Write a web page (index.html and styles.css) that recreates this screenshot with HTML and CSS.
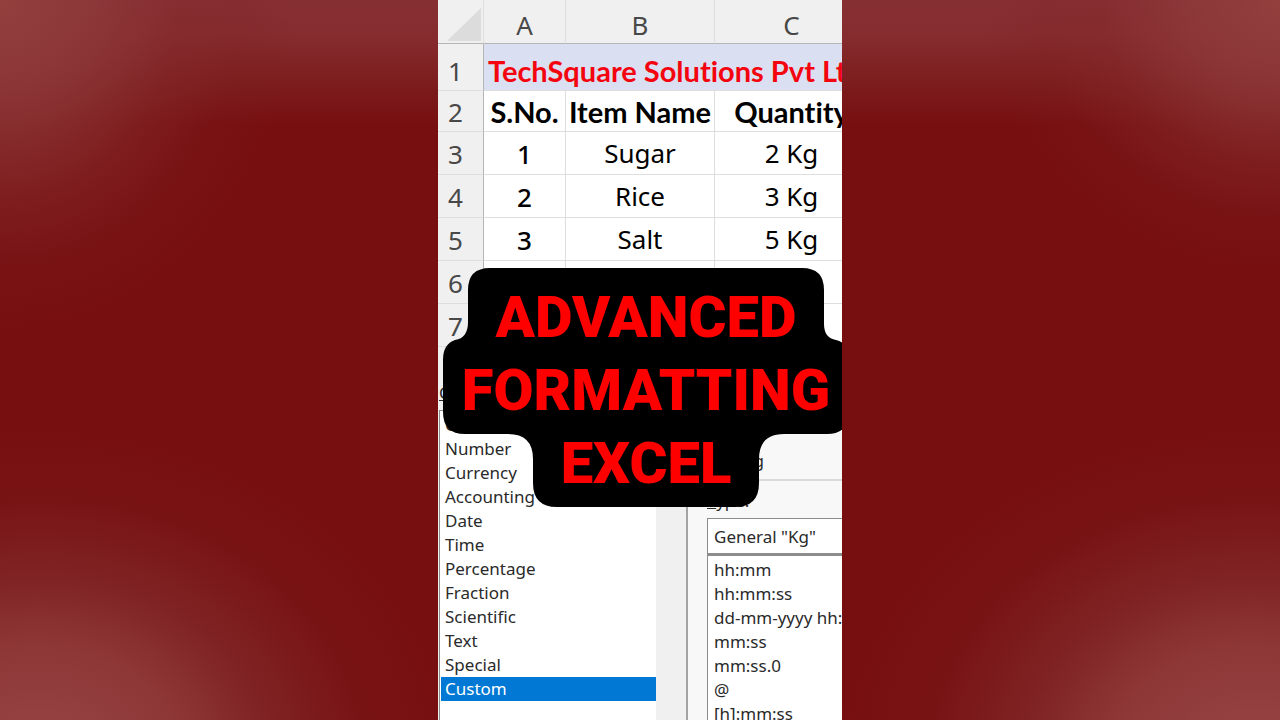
FILE: index.html
```html
<!DOCTYPE html>
<html lang="en">
<head>
    <meta charset="UTF-8">
    <meta name="viewport" content="width=device-width, initial-scale=1.0">
    <title>Advanced Formatting Excel</title>
    <link rel="stylesheet" href="styles.css">
</head>
<body>
    <main class="short">
        <table class="sheet">
            <colgroup>
                <col class="col-num">
                <col class="col-a">
                <col class="col-b">
                <col class="col-c">
            </colgroup>
            <thead>
                <tr>
                    <th class="corner"><svg width="34" height="34" viewBox="0 0 34 34"><path d="M34 0V33H0Z" fill="#dcdcdc"/></svg></th>
                    <th scope="col">A</th>
                    <th scope="col">B</th>
                    <th scope="col">C</th>
                </tr>
            </thead>
            <tbody>
                <tr class="title"><th scope="row">1</th><td colspan="3">TechSquare Solutions Pvt Ltd</td></tr>
                <tr class="names"><th scope="row">2</th><td>S.No.</td><td>Item Name</td><td>Quantity</td></tr>
                <tr><th scope="row">3</th><td class="sno">1</td><td>Sugar</td><td>2 Kg</td></tr>
                <tr><th scope="row">4</th><td class="sno">2</td><td>Rice</td><td>3 Kg</td></tr>
                <tr><th scope="row">5</th><td class="sno">3</td><td>Salt</td><td>5 Kg</td></tr>
                <tr><th scope="row">6</th><td></td><td></td><td></td></tr>
                <tr><th scope="row">7</th><td></td><td></td><td></td></tr>
            </tbody>
        </table>

        <!-- format cells dialog -->
        <form class="dialog">
            <div class="category">
                <label for="category"><u>C</u>ategory:</label>
                <select id="category" size="13">
                    <option>General</option>
                    <option>Number</option>
                    <option>Currency</option>
                    <option>Accounting</option>
                    <option>Date</option>
                    <option>Time</option>
                    <option>Percentage</option>
                    <option>Fraction</option>
                    <option>Scientific</option>
                    <option>Text</option>
                    <option>Special</option>
                    <option selected>Custom</option>
                </select>
            </div>
            <div class="format">
                <div class="sample">25 Kg</div>
                <label for="type"><u>T</u>ype:</label>
                <input type="text" id="type" value='General "Kg"'>
                <select size="7" aria-label="Format codes">
                    <option>hh:mm</option>
                    <option>hh:mm:ss</option>
                    <option>dd-mm-yyyy hh:mm</option>
                    <option>mm:ss</option>
                    <option>mm:ss.0</option>
                    <option>@</option>
                    <option>[h]:mm:ss</option>
                </select>
            </div>
        </form>

        <h1 class="caption">
            <svg width="406" height="239" viewBox="0 0 406 239">
                <path d="M25 22Q25 0 47 0H359Q381 0 381 22V56Q381 70 393 72Q406 75 406 90V144Q406 166 384 166H341Q316 166 316 191V215Q316 239 292 239H114Q90 239 90 215V191Q90 166 65 166H22Q0 166 0 144V92Q0 76 12 72Q25 70 25 54Z"/>
            </svg>
            <span>ADVANCED</span>
            <span>FORMATTING</span>
            <span>EXCEL</span>
        </h1>
    </main>
</body>
</html>
```
FILE: styles.css
```css
* {
    box-sizing: border-box;
}
body {
    margin: 0;
    min-height: 100vh;
    display: grid;
    grid-template-columns: 1fr 404px 1fr;
    background-color: #770f10;
    background-image:
        radial-gradient(ellipse 420px 340px at 3% 106%, #944040 15%, #903b3be6 35%, #85303199 55%, #7d202140 78%, transparent),
        radial-gradient(ellipse 420px 340px at 98% 106%, #944040 15%, #903b3be6 35%, #85303199 55%, #7d202140 78%, transparent),
        radial-gradient(ellipse 300px 340px at 0 0, #933f3e, #8c3738cc 35%, #84292b80 60%, #7d202130 80%, transparent),
        radial-gradient(ellipse 300px 280px at 100% 0, #933f3e, #8c3738cc 35%, #84292b80 60%, #7d202130 80%, transparent),
        linear-gradient(#863034, #862c2f 35px, #7c1c1d 85px, #770f10 125px);
}
.short {
    grid-column: 2;
    position: relative;
    height: 100vh;
    overflow: hidden;
    display: flex;
    flex-direction: column;
    background: #f8f8f8;
    font-family: "Noto Sans", sans-serif;
}

/* sheet */
.sheet {
    width: 431px;
    flex: none;
    table-layout: fixed;
    border-collapse: separate;
    border-spacing: 0;
    background: #fff;
    font-size: 26px;
    line-height: 36px;
    text-align: center;
}
.col-num { width: 46px; }
.col-a { width: 82px; }
.col-b { width: 149px; }
.col-c { width: 154px; }
.sheet tr {
    height: 43px;
}
.sheet th, .sheet td {
    padding: 0;
    border-right: 1px solid #dedede;
    border-bottom: 1px solid #dedede;
    white-space: nowrap;
}
.sheet th {
    background: #f0f0f0;
    color: #484848;
    font-weight: 400;
}
.sheet tbody th {
    border-right-color: #b5b5b5;
    padding: 2px 10px 0 0;
}
.sheet thead tr {
    height: 44px;
}
.sheet thead th {
    border-bottom-color: #b5b5b5;
    padding-top: 7px;
}
.sheet .corner {
    text-align: right;
    line-height: 0;
    padding-right: 2px;
}
.sheet .title {
    height: 47px;
}
.sheet .title th {
    padding-top: 8px;
}
.sheet .names {
    height: 41px;
}
.title td, .names td {
    font-family: Lato, sans-serif;
    font-size: 29px;
    font-weight: 700;
    font-variant-ligatures: none;
}
.sheet .names td {
    padding-top: 2px;
}
.sheet .title td {
    background: #dae0f1;
    color: #f4040f;
    text-align: left;
    padding: 8px 0 0 4px;
}
.sheet .sno {
    padding-top: 2px;
    font-weight: 500;
}

/* dialog */
.dialog {
    flex: 1;
    display: flex;
    font-size: 17px;
    line-height: 24px;
    color: #2a2a2a;
}
.dialog select, .dialog input {
    display: block;
    width: 100%;
    margin: 0;
    border: 1px solid #8c8c8c;
    border-radius: 0;
    outline: none;
    background: #fff;
    color: #2a2a2a;
    font: inherit;
}
.dialog select {
    overflow: hidden;
}
.dialog option {
    height: 24px;
    min-height: 24px;
    padding: 0 5px;
    line-height: 24px;
}
.dialog option:checked {
    background: linear-gradient(#0078d4, #0078d4);
    -webkit-text-fill-color: #fff;
}
.category {
    width: 250px;
    padding-top: 34px;
    border-right: 2px solid #a3a3a3;
    background: #f0f0f0;
}
.category label {
    display: block;
    padding-left: 1px;
    height: 29px;
}
.category select {
    width: 217px;
    height: 320px;
    border-right: 0;
    padding: 2px 0 0 1px;
    margin-left: 1px;
}
.category option {
    padding: 0 4px;
}
.format {
    flex: 1;
    margin-right: -40px;
    padding-left: 19px;
}
.sample {
    height: 134px;
    padding: 102px 0 0 12px;
    border-bottom: 2px solid #dadada;
}
.format label {
    display: block;
    padding-top: 8px;
    height: 37px;
}
.format input {
    height: 36px;
    padding: 0 6px;
}
.format select {
    height: 200px;
    border-top: 2px solid #8c8c8c;
    padding: 2px 0 0 1px;
}

/* caption over the sheet and the dialog */
.caption {
    position: absolute;
    top: 268px;
    left: 5px;
    width: 406px;
    margin: 0;
    padding-top: 13px;
    display: flex;
    flex-direction: column;
    align-items: center;
    color: #f00;
    font: 900 58px/73px Roboto, sans-serif;
}
.caption svg {
    position: absolute;
    top: 0;
    left: 0;
}
.caption span {
    position: relative;
}
```
